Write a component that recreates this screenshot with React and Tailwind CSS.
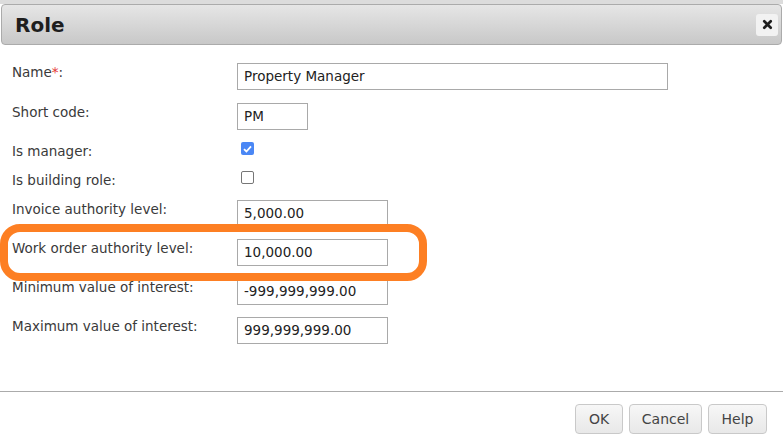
import { X } from 'lucide-react';

const fields = [
  { label: 'Invoice authority level:', value: '5,000.00' },
  { label: 'Work order authority level:', value: '10,000.00' },
  { label: 'Minimum value of interest:', value: '-999,999,999.00' },
  { label: 'Maximum value of interest:', value: '999,999,999.00' },
];

function Label({ children }) {
  return <div className="w-[225px] shrink-0 pt-[1px] leading-[17px]">{children}</div>;
}

function TextBox({ value, width }) {
  return (
    <div className={`${width} h-[27px] border border-[#a9a9a9] bg-white px-[6px] flex items-center text-[13.5px] text-[#222]`}>
      {value}
    </div>
  );
}

function Check({ checked }) {
  return (
    <div className="h-[29px] flex items-start">
      <div className="w-[225px] shrink-0 pt-[5px] leading-[17px]">{checked ? 'Is manager:' : 'Is building role:'}</div>
      <div className="pl-[4px] pt-[4px]">
        {checked ? (
          <div className="w-[13px] h-[13px] rounded-[2px] bg-[#4a87f5] flex items-center justify-center">
            <svg width="9" height="8" viewBox="0 0 9 8">
              <path d="M1 4.2 L3.4 6.5 L8 1.3" stroke="white" strokeWidth="1.8" fill="none" />
            </svg>
          </div>
        ) : (
          <div className="w-[13px] h-[13px] rounded-[2px] border border-[#767676] bg-white" />
        )}
      </div>
    </div>
  );
}

function Btn({ children, w }) {
  return (
    <button
      type="button"
      className={`${w} h-[30px] rounded-[4px] border border-[#c9c9c9] bg-gradient-to-b from-[#f7f7f7] to-[#e8e8e8] text-[14px] text-[#444]`}
    >
      {children}
    </button>
  );
}

export default function App() {
  return (
    <div className="relative w-[783px] h-[445px] bg-white overflow-hidden text-[13.5px] text-[#3a3a3a] font-['DejaVu_Sans',Verdana,sans-serif]">
      <div className="h-[4px] bg-[#dcdcdc]" />
      {/* title bar */}
      <div className="mx-[1px] h-[41px] rounded-[4px] border border-[#ababab] bg-gradient-to-b from-[#e6e6e6] to-[#c8c8c8] flex items-center justify-between pl-[13px] pr-[3px]">
        <span className="text-[20px] font-bold text-[#1e1e1e] leading-none">Role</span>
        <button type="button" className="w-[22px] h-[22px] rounded-[3px] bg-[#f2f2f2] flex items-center justify-center">
          <X size={13} strokeWidth={5} className="text-[#1e1e1e]" />
        </button>
      </div>

      {/* form */}
      <div className="pl-[12px] pt-[18px]">
        <div className="flex items-start">
          <Label>
            Name<span className="text-[#e53935]">*</span>:
          </Label>
          <TextBox value="Property Manager" width="w-[431px]" />
        </div>
        <div className="flex items-start mt-[13px]">
          <Label>Short code:</Label>
          <TextBox value="PM" width="w-[71px]" />
        </div>
        <div className="mt-[8px]">
          <Check checked />
          <Check />
        </div>
        <div className="mt-[4px] flex flex-col gap-[12px]">
          {fields.map((f) => (
            <div key={f.label} className="flex items-start">
              <Label>{f.label}</Label>
              <TextBox value={f.value} width="w-[151px]" />
            </div>
          ))}
        </div>
      </div>

      {/* footer */}
      <div className="absolute left-0 right-0 top-[391px] border-t border-[#ababab] flex justify-end gap-[6px] pr-[16px] pt-[12px]">
        <Btn w="w-[48px]">OK</Btn>
        <Btn w="w-[73px]">Cancel</Btn>
        <Btn w="w-[59px]">Help</Btn>
      </div>

      {/* orange highlight annotation */}
      <div className="absolute left-[0px] top-[224px] w-[427px] h-[57px] rounded-[20px] border-[8px] border-[#fd7f23]" />
    </div>
  );
}
